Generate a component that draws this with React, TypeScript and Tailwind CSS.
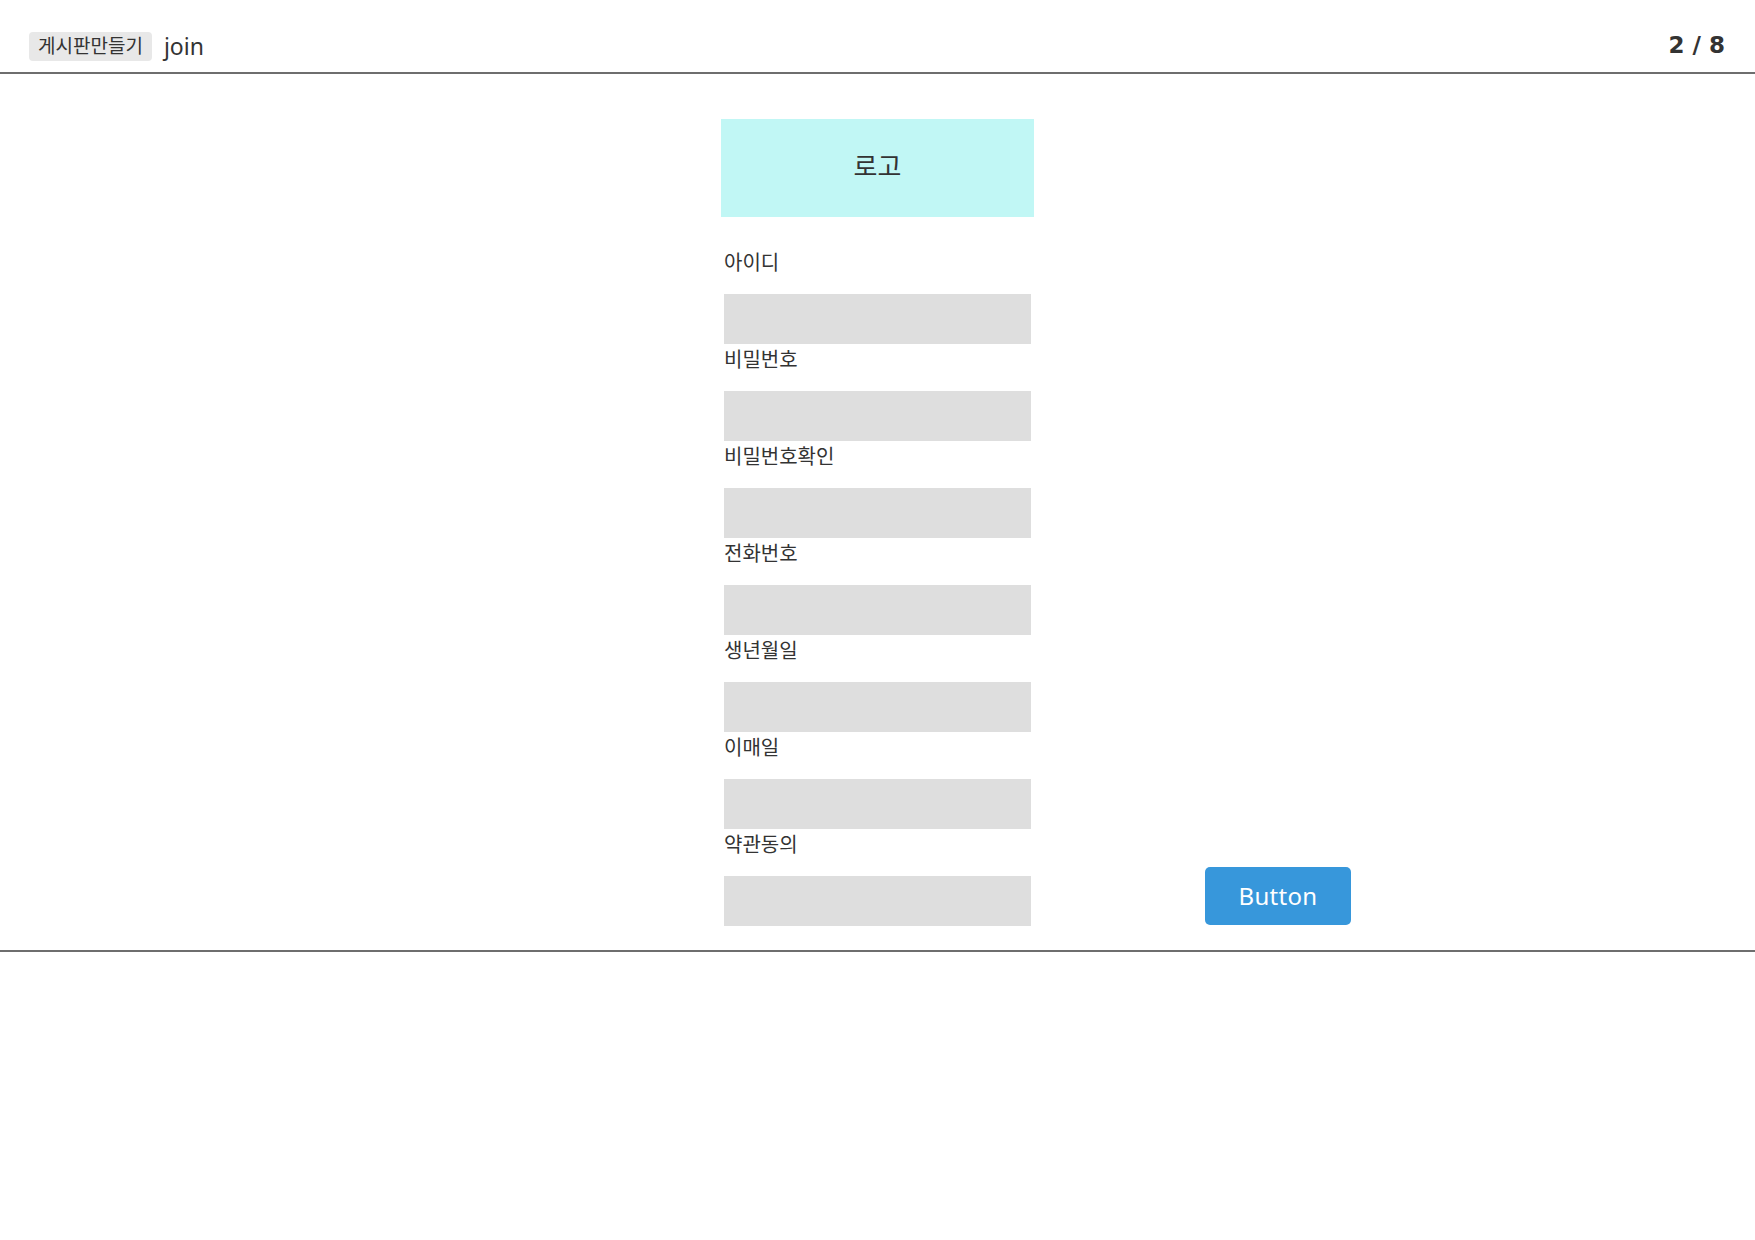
const fields = ['아이디', '비밀번호', '비밀번호확인', '전화번호', '생년월일', '이매일', '약관동의'];

export default function App() {
  return (
    <div className="w-[1755px] h-[1240px] bg-white text-[#333333] font-['Noto_Sans','Noto_Sans_CJK_KR',sans-serif]">
      <header className="flex items-center justify-between pl-[29px] pr-[26px] pt-[32px] pb-[11px] border-b-2 border-[#6e6e6e]">
        <div className="flex items-center gap-[12px]">
          <span className="bg-[#e8e8e8] rounded-[4px] px-[9px] h-[29px] flex items-center text-[19px] text-[#333333]">
            게시판만들기
          </span>
          <span className="text-[23px] leading-[29px] text-[#333333]">join</span>
        </div>
        <div className="font-['DejaVu_Sans',sans-serif] font-bold text-[23px] leading-[27px] mb-[2px] text-[#333333] pr-[4px]">
          2 / 8
        </div>
      </header>

      <main className="flex border-b-2 border-[#6e6e6e] pt-[45px] pb-[24px]">
        <div className="flex-1" />
        <div className="w-[313px] flex flex-col">
          <div className="h-[98px] bg-[#c1f7f5] flex items-center justify-center pb-[4px] text-[26px] text-[#333333]">
            로고
          </div>
          <div className="mt-[30px] px-[3px] flex flex-col">
            {fields.map((f) => (
              <div key={f} className="flex flex-col">
                <div className="h-[47px] text-[20px] leading-[32px] text-[#333333]">{f}</div>
                <div className="h-[50px] bg-[#dedede]" />
              </div>
            ))}
          </div>
        </div>
        <div className="flex-1 flex items-end">
          <button className="ml-[171px] mb-[1px] w-[146px] h-[58px] bg-[#3797db] rounded-[5px] text-white text-[24px] tracking-[0.3px] flex items-center justify-center">
            Button
          </button>
        </div>
      </main>
    </div>
  );
}
